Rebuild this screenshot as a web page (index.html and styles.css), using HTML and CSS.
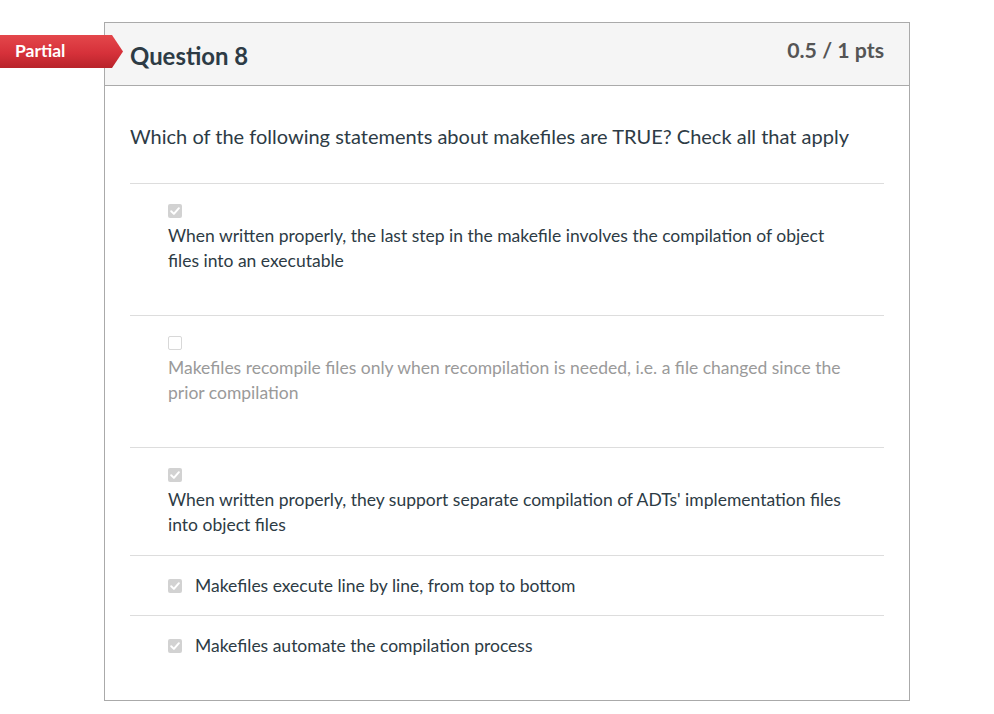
FILE: index.html
```html
<!DOCTYPE html>
<html>
<head>
<meta charset="utf-8">
<link rel="stylesheet" href="styles.css">
</head>
<body>
<div class="page">
  <div class="badge">Partial</div>
  <div class="panel">
    <div class="header">
      <h2 class="name">Question 8</h2>
      <div class="pts">0.5 / 1 pts</div>
    </div>
    <div class="body">
      <p class="qtext">Which of the following statements about makefiles are TRUE? Check all that apply</p>
      <div class="answers">
        <div class="answer stacked tall">
          <span class="cb checked"><svg viewBox="0 0 14 14"><path d="M3.2 7.3 L5.9 9.9 L10.9 4.2" /></svg></span>
          <div class="atext">When written properly, the last step in the makefile involves the compilation of object files into an executable</div>
        </div>
        <div class="answer stacked tall muted">
          <span class="cb"></span>
          <div class="atext">Makefiles recompile files only when recompilation is needed, i.e. a file changed since the prior compilation</div>
        </div>
        <div class="answer stacked">
          <span class="cb checked"><svg viewBox="0 0 14 14"><path d="M3.2 7.3 L5.9 9.9 L10.9 4.2" /></svg></span>
          <div class="atext">When written properly, they support separate compilation of ADTs' implementation files into object files</div>
        </div>
        <div class="answer inline">
          <span class="cb checked"><svg viewBox="0 0 14 14"><path d="M3.2 7.3 L5.9 9.9 L10.9 4.2" /></svg></span>
          <div class="atext">Makefiles execute line by line, from top to bottom</div>
        </div>
        <div class="answer inline last">
          <span class="cb checked"><svg viewBox="0 0 14 14"><path d="M3.2 7.3 L5.9 9.9 L10.9 4.2" /></svg></span>
          <div class="atext">Makefiles automate the compilation process</div>
        </div>
      </div>
    </div>
  </div>
</div>
</body>
</html>
```
FILE: styles.css
```css
html, body {
  margin: 0;
  padding: 0;
  background: #fff;
}
body {
  font-family: Lato, "Open Sans", sans-serif;
  color: #2d3b45;
}
.page {
  position: relative;
  padding: 22px 0 0 104px;
  width: 806px;
}
.badge {
  position: absolute;
  left: 0;
  top: 35px;
  width: 123px;
  height: 33px;
  box-sizing: border-box;
  padding-left: 15px;
  line-height: 32px;
  color: #fff;
  font-weight: 700;
  font-size: 17.5px;
  background: linear-gradient(#e4474b 0%, #d6313a 55%, #b8232a 100%);
  clip-path: polygon(0 0, 112px 0, 123px 50%, 112px 100%, 0 100%);
  z-index: 2;
}
.panel {
  border: 1px solid #aaa;
  background: #fff;
}
.header {
  display: flex;
  justify-content: space-between;
  align-items: flex-start;
  height: 63px;
  box-sizing: border-box;
  background: #f5f5f5;
  border-bottom: 1px solid #aaa;
  padding: 0 25px;
}
.name {
  margin: 0;
  padding-top: 18px;
  font-size: 23.9px;
  font-weight: 700;
  line-height: 30px;
  color: #2d3b45;
}
.pts {
  padding-top: 13px;
  font-size: 21.3px;
  font-weight: 700;
  line-height: 28px;
  color: #555;
}
.body {
  padding: 0 25px 40px;
}
.qtext {
  margin: 0;
  padding: 36px 0 33px;
  font-size: 20px;
  line-height: 28px;
}
.answer {
  border-top: 1px solid #ddd;
  font-size: 17.5px;
  line-height: 25px;
}
.answer.stacked {
  padding: 20px 40px 18px 38px;
}
.answer.stacked.tall {
  padding-bottom: 42px;
}
.answer.stacked .cb {
  display: block;
  margin-bottom: 5px;
}
.answer.inline {
  display: flex;
  align-items: center;
  gap: 13px;
  padding: 17px 0 17px 38px;
}
.answer.inline.last {
  padding-bottom: 2px;
}
.muted {
  color: #9a9a9a;
}
.cb {
  width: 14px;
  height: 14px;
  box-sizing: border-box;
  border-radius: 2px;
  border: 1px solid #d8d8d8;
  background: #fff;
  flex: none;
}
.cb.checked {
  border: none;
  background: #d2d2d2;
}
.cb svg {
  display: block;
  width: 14px;
  height: 14px;
}
.cb path {
  fill: none;
  stroke: #fff;
  stroke-width: 2;
  stroke-linecap: round;
  stroke-linejoin: round;
}
```
